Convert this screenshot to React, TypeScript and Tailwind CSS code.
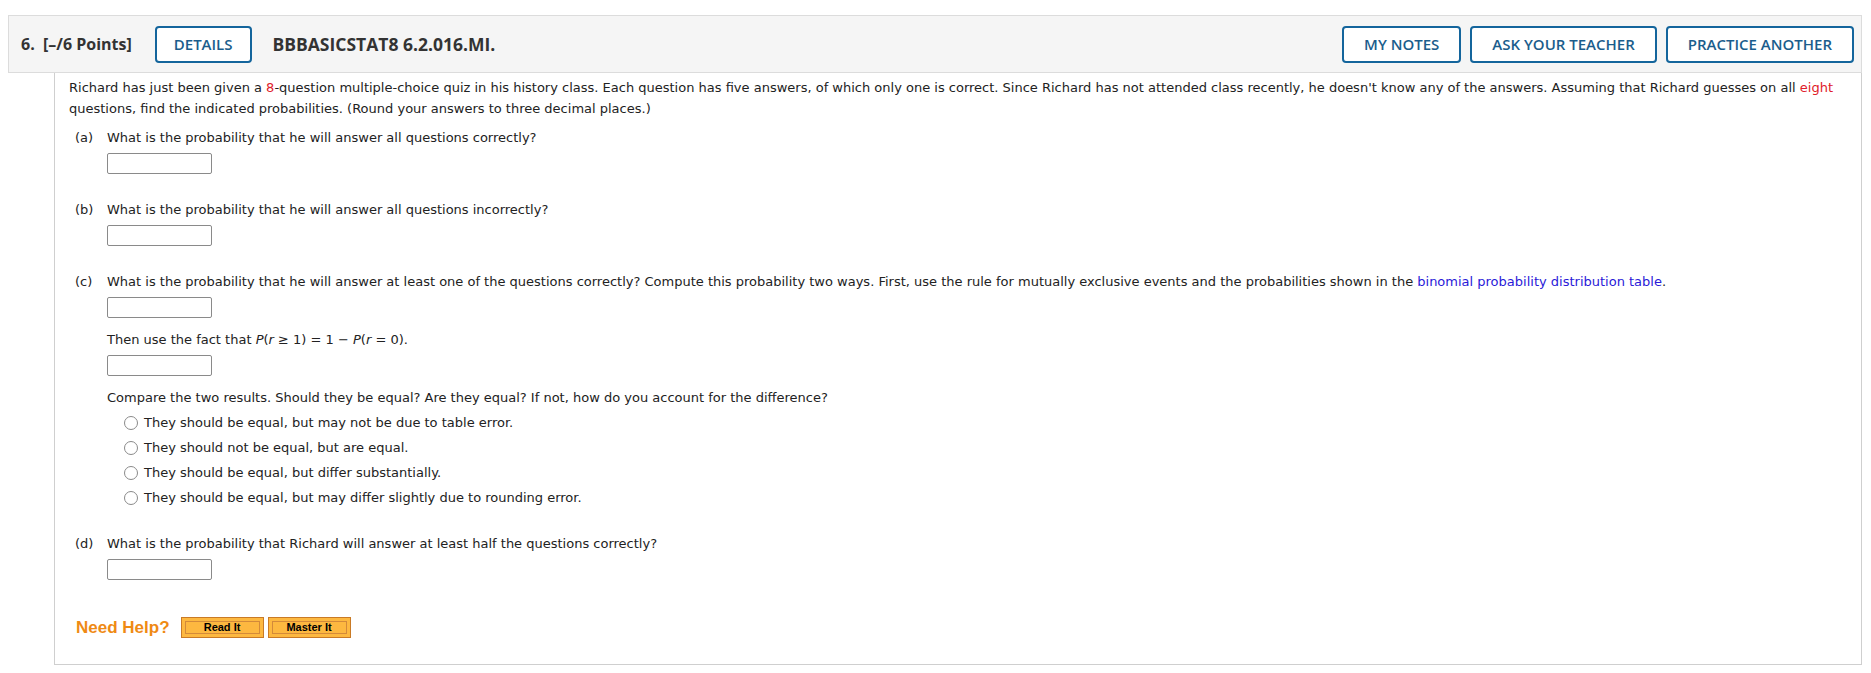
import React from 'react';

const body = { fontFamily: '"DejaVu Sans", Verdana, sans-serif' };
const head = { fontFamily: '"Open Sans", "Liberation Sans", sans-serif' };

function AnswerBox() {
  return <div className="w-[105px] h-[21px] border border-[#8a8a8a] rounded-[2px] bg-white" />;
}

function Part({ label, children }: { label: string; children: React.ReactNode }) {
  return (
    <div className="flex">
      <div className="w-[38px] pl-[6px] shrink-0">{label}</div>
      <div className="flex-1">{children}</div>
    </div>
  );
}

const choices = [
  'They should be equal, but may not be due to table error.',
  'They should not be equal, but are equal.',
  'They should be equal, but differ substantially.',
  'They should be equal, but may differ slightly due to rounding error.',
];

export default function App() {
  return (
    <div className="bg-white w-[1871px] h-[673px] pt-[15px] pl-[8px]">
      {/* Header */}
      <div
        className="w-[1854px] h-[58px] bg-[#f5f5f5] border border-[#dcdcdc] flex items-center pl-[12px] pr-[7px]"
        style={head}
      >
        <span className="text-[16px] font-bold text-[#333]">6.&nbsp; [–/6 Points]</span>
        <button className="ml-[23px] h-[37px] px-[17px] border-2 border-[#14659c] rounded-[4px] text-[15px] font-semibold text-[#1b5d8c] bg-white">
          DETAILS
        </button>
        <span className="ml-[21px] text-[17.5px] font-bold text-[#333]">BBBASICSTAT8 6.2.016.MI.</span>
        <div className="ml-auto flex gap-[9px]">
          {['MY NOTES', 'ASK YOUR TEACHER', 'PRACTICE ANOTHER'].map((b) => (
            <button
              key={b}
              className="h-[37px] px-[20px] border-2 border-[#14659c] rounded-[4px] text-[15px] font-semibold text-[#1b5d8c] bg-white"
            >
              {b}
            </button>
          ))}
        </div>
      </div>

      {/* Body */}
      <div
        className="ml-[46px] w-[1808px] h-[592px] border-x border-b border-[#cfcfcf] pl-[14px] pt-[4px] text-[13px] leading-[21px] text-[#222]"
        style={body}
      >
        <p>
          Richard has just been given a <span className="text-[#e0202a]">8</span>-question multiple-choice quiz in his
          history class. Each question has five answers, of which only one is correct. Since Richard has not attended
          class recently, he doesn't know any of the answers. Assuming that Richard guesses on all{' '}
          <span className="text-[#e0202a]">eight</span> questions, find the indicated probabilities. (Round your
          answers to three decimal places.)
        </p>

        <div className="mt-[8px]">
          <Part label="(a)">
            <p>What is the probability that he will answer all questions correctly?</p>
            <div className="mt-[5px]"><AnswerBox /></div>
          </Part>
        </div>

        <div className="mt-[25px]">
          <Part label="(b)">
            <p>What is the probability that he will answer all questions incorrectly?</p>
            <div className="mt-[5px]"><AnswerBox /></div>
          </Part>
        </div>

        <div className="mt-[25px]">
          <Part label="(c)">
            <p>
              What is the probability that he will answer at least one of the questions correctly? Compute this
              probability two ways. First, use the rule for mutually exclusive events and the probabilities shown in
              the <span className="text-[#2a1ad8]">binomial probability distribution table</span>.
            </p>
            <div className="mt-[5px]"><AnswerBox /></div>
            <p className="mt-[11px]">
              Then use the fact that <i>P</i>(<i>r</i> ≥ 1) = 1 − <i>P</i>(<i>r</i> = 0).
            </p>
            <div className="mt-[5px]"><AnswerBox /></div>
            <p className="mt-[11px]">
              Compare the two results. Should they be equal? Are they equal? If not, how do you account for the
              difference?
            </p>
            <div className="mt-[4px] flex flex-col gap-[4px] pl-[17px]">
              {choices.map((c) => (
                <label key={c} className="flex items-center gap-[6px]">
                  <span className="w-[14px] h-[14px] rounded-full border border-[#8a8a8a] bg-white shrink-0" />
                  <span>{c}</span>
                </label>
              ))}
            </div>
          </Part>
        </div>

        <div className="mt-[25px]">
          <Part label="(d)">
            <p>What is the probability that Richard will answer at least half the questions correctly?</p>
            <div className="mt-[5px]"><AnswerBox /></div>
          </Part>
        </div>

        <div className="mt-[37px] flex items-center pl-[7px]" style={{ fontFamily: '"Liberation Sans", Arial, sans-serif' }}>
          <span className="text-[17px] font-bold text-[#ef8a14] mr-[11px]">Need Help?</span>
          {['Read It', 'Master It'].map((b) => (
            <span
              key={b}
              className="mr-[4px] w-[83px] h-[21px] border border-[#c97a26] bg-[#fdb840] p-[3px] flex"
            >
              <span className="flex-1 border border-[#d38a3a] flex items-center justify-center text-[11px] font-bold text-black leading-none">
                {b}
              </span>
            </span>
          ))}
        </div>
      </div>
    </div>
  );
}
